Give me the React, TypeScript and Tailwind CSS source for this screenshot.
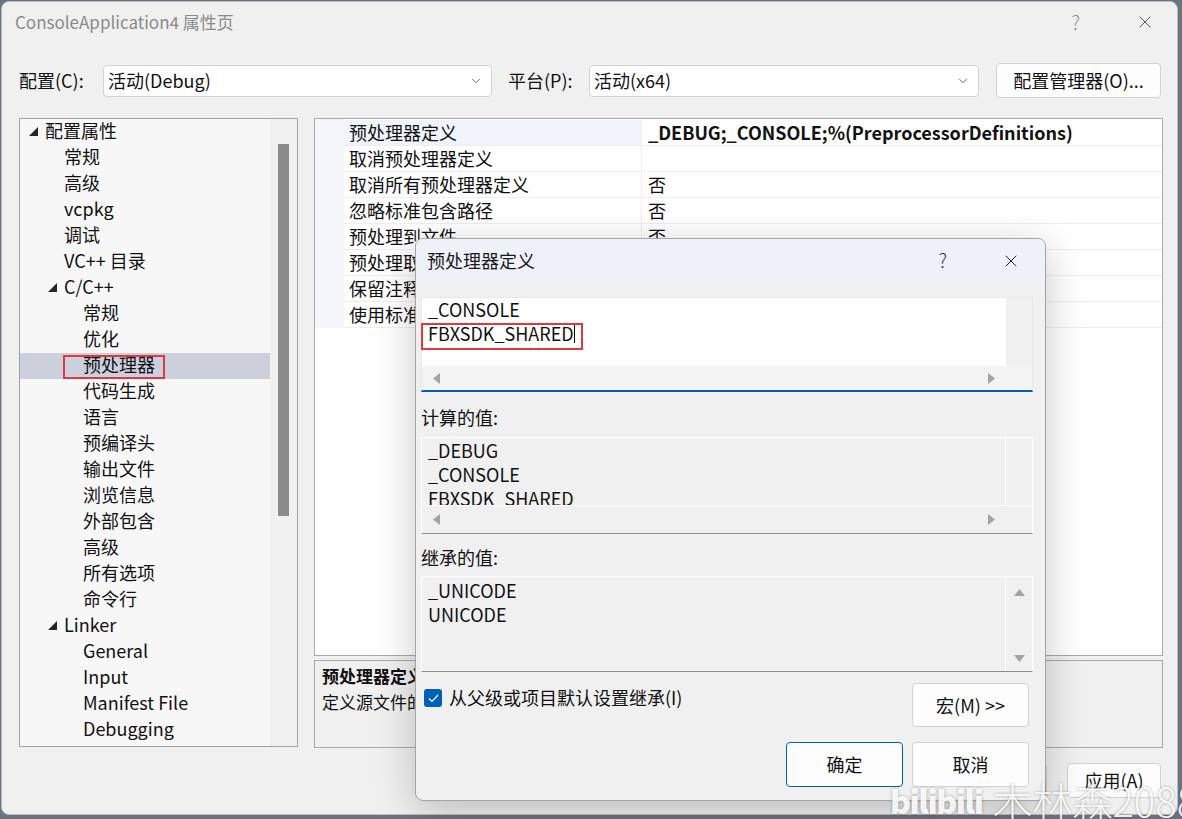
import { X, ChevronDown } from 'lucide-react'

type TreeItem = { label: string; level: 0 | 1 | 2; expand?: boolean; selected?: boolean }

const tree: TreeItem[] = [
  { label: '配置属性', level: 0, expand: true },
  { label: '常规', level: 1 },
  { label: '高级', level: 1 },
  { label: 'vcpkg', level: 1 },
  { label: '调试', level: 1 },
  { label: 'VC++ 目录', level: 1 },
  { label: 'C/C++', level: 1, expand: true },
  { label: '常规', level: 2 },
  { label: '优化', level: 2 },
  { label: '预处理器', level: 2, selected: true },
  { label: '代码生成', level: 2 },
  { label: '语言', level: 2 },
  { label: '预编译头', level: 2 },
  { label: '输出文件', level: 2 },
  { label: '浏览信息', level: 2 },
  { label: '外部包含', level: 2 },
  { label: '高级', level: 2 },
  { label: '所有选项', level: 2 },
  { label: '命令行', level: 2 },
  { label: 'Linker', level: 1, expand: true },
  { label: 'General', level: 2 },
  { label: 'Input', level: 2 },
  { label: 'Manifest File', level: 2 },
  { label: 'Debugging', level: 2 },
]

const indent = { 0: 'w-[9px]', 1: 'w-[28px]', 2: 'w-[47px]' }

const props: [string, string, boolean?][] = [
  ['预处理器定义', '_DEBUG;_CONSOLE;%(PreprocessorDefinitions)', true],
  ['取消预处理器定义', ''],
  ['取消所有预处理器定义', '否'],
  ['忽略标准包含路径', '否'],
  ['预处理到文件', '否'],
  ['预处理取消显示行号', '否'],
  ['保留注释', '否'],
  ['使用标准符合性预处理器', ''],
]

function Expander() {
  return (
    <svg width="9" height="9" viewBox="0 0 9 9">
      <polygon points="9,0 9,9 0,9" fill="#262626" />
    </svg>
  )
}

function ArrowLeft() {
  return (
    <svg width="7" height="11" viewBox="0 0 7 11">
      <polygon points="7,0 7,11 0,5.5" fill="#a3a3a3" />
    </svg>
  )
}

function ArrowRight() {
  return (
    <svg width="7" height="11" viewBox="0 0 7 11">
      <polygon points="0,0 7,5.5 0,11" fill="#a3a3a3" />
    </svg>
  )
}

function HScroll() {
  return (
    <div className="flex-1 flex items-center justify-between pl-[11px] pr-[37px]">
      <ArrowLeft />
      <ArrowRight />
    </div>
  )
}

function Combo({ text, width }: { text: string; width: string }) {
  return (
    <div className={`${width} h-[32px] bg-white border border-[#d3d3d3] rounded-[4px] flex items-center pl-[4px] pr-[8px]`}>
      <span className="text-[18px] text-[#111]">{text}</span>
      <ChevronDown className="ml-auto w-[14px] h-[14px] text-[#555]" strokeWidth={1.5} />
    </div>
  )
}

function PreprocessorDialog() {
  return (
    <div className="absolute left-[415px] top-[238px] w-[631px] h-[563px] rounded-[8px] border border-[#a4a4a4] bg-[#f0f0f0] shadow-[0_10px_40px_rgba(0,0,0,0.22)] overflow-hidden flex flex-col">
      <div className="h-[47px] shrink-0 bg-[#eef2f8] flex items-center pl-[11px] pr-[24px] pb-[4px]">
        <span className="text-[18px] text-[#1a1a1a]">预处理器定义</span>
        <span className="ml-auto text-[19px] text-[#333] font-light">?</span>
        <X className="ml-[54px] w-[20px] h-[20px] text-[#222]" strokeWidth={1.2} />
      </div>

      <div className="flex flex-col pl-[5px] pt-[11px] text-[18px] text-[#111]">
        {/* edit box */}
        <div className="relative w-[612px] h-[95px] bg-[#f3f3f3] border border-[#e8e8e8] border-b-2 border-b-[#005fb8] flex flex-col">
          <div className="flex h-[68px]">
            <div className="w-[584px] bg-white pl-[6px] leading-[24px]">
              <div className="-mt-[1px]">_CONSOLE</div>
              <div className="flex items-center">
                FBXSDK_SHARED
                <span className="w-[1px] h-[20px] bg-black" />
              </div>
            </div>
            <div className="flex-1 bg-[#f0f0f0]" />
          </div>
          <HScroll />
          <div className="absolute left-[-1px] top-[25px] w-[162px] h-[27px] border-2 border-[#e0383e]" />
        </div>

        <div className="mt-[13px] leading-[24px]">计算的值:</div>
        <div className="mt-[8px] w-[612px] h-[97px] bg-[#f0f0f0] border border-white border-b-[#8c8c8c] flex flex-col">
          <div className="flex h-[68px]">
            <div className="w-[584px] border-r border-b border-white pl-[6px] leading-[24px] overflow-hidden">
              <div>_DEBUG</div>
              <div>_CONSOLE</div>
              <div>FBXSDK_SHARED</div>
            </div>
            <div className="flex-1 border-b border-white" />
          </div>
          <HScroll />
        </div>

        <div className="mt-[11px] leading-[24px]">继承的值:</div>
        <div className="mt-[7px] w-[612px] h-[96px] bg-[#f0f0f0] border border-white border-b-[#8c8c8c] flex">
          <div className="w-[584px] border-r border-white pl-[6px] pt-[1px] leading-[24px]">
            <div>_UNICODE</div>
            <div>UNICODE</div>
          </div>
          <div className="flex-1 flex flex-col items-center justify-between pt-[12px] pb-[9px]">
            <svg width="11" height="7" viewBox="0 0 11 7">
              <polygon points="0,7 5.5,0 11,7" fill="#a3a3a3" />
            </svg>
            <svg width="11" height="7" viewBox="0 0 11 7">
              <polygon points="0,0 11,0 5.5,7" fill="#a3a3a3" />
            </svg>
          </div>
        </div>

        <div className="mt-[11px] w-[612px] flex items-start">
          <div className="mt-[6px] ml-[3px] w-[18px] h-[18px] rounded-[3px] bg-[#005fb8] flex items-center justify-center">
            <svg width="11" height="9" viewBox="0 0 11 9">
              <path d="M1 4.5 L4 7.5 L10 1" stroke="white" strokeWidth="1.2" fill="none" />
            </svg>
          </div>
          <span className="ml-[7px] mt-[2px] leading-[24px]">从父级或项目默认设置继承(I)</span>
          <button className="ml-auto mr-[4px] w-[117px] h-[44px] bg-[#fdfdfd] border border-[#d2d2d2] rounded-[4px] text-[18px]">
            宏(M) &gt;&gt;
          </button>
        </div>

        <div className="mt-[15px] w-[612px] flex justify-end gap-[9px] pr-[4px]">
          <button className="w-[117px] h-[45px] bg-[#fdfdfd] border border-[#005fb8] rounded-[4px] text-[18px]">确定</button>
          <button className="w-[117px] h-[45px] bg-[#fdfdfd] border border-[#d2d2d2] rounded-[4px] text-[18px]">取消</button>
        </div>
      </div>
    </div>
  )
}

export default function App() {
  return (
    <div className="relative w-[1182px] h-[819px] overflow-hidden bg-[#6a7480] pt-[1px] pl-[1px] font-['Noto_Sans_CJK_SC',sans-serif] text-[#111]">
      <div className="w-[1177px] h-[814px] rounded-[8px] bg-[#f0f0f0] border border-[#bdbdbd] flex flex-col">
        {/* title bar */}
        <div className="h-[44px] shrink-0 flex items-center pl-[13px] pr-[22px] pb-[4px]">
          <span className="text-[17px] text-[#8a8a8a]">ConsoleApplication4 属性页</span>
          <span className="ml-auto text-[19px] text-[#8a8a8a] font-light">?</span>
          <X className="ml-[55px] w-[20px] h-[20px] text-[#555]" strokeWidth={1.2} />
        </div>

        {/* config row */}
        <div className="mt-[17px] h-[35px] flex items-center pl-[17px] text-[18px]">
          <span className="w-[84px]">配置(C):</span>
          <Combo text="活动(Debug)" width="w-[389px]" />
          <span className="ml-[16px] w-[81px]">平台(P):</span>
          <Combo text="活动(x64)" width="w-[390px]" />
          <button className="ml-[17px] w-[165px] h-[35px] bg-[#fdfdfd] border border-[#d2d2d2] rounded-[4px] text-[18px]">
            配置管理器(O)...
          </button>
        </div>

        {/* main */}
        <div className="mt-[20px] flex pl-[17px] gap-[16px]">
          <div className="w-[279px] h-[629px] border border-[#a3a3a3] bg-[#f7f7f7] flex overflow-hidden">
            <div className="w-[250px] text-[18px]">
              {tree.map((t, i) => (
                <div
                  key={i}
                  className={`relative h-[26px] flex items-center pb-[4px] ${t.selected ? 'bg-[#ccd0dc]' : ''}`}
                >
                  <div className={indent[t.level]} />
                  <div className="w-[16px] flex items-center pt-[2px]">{t.expand && <Expander />}</div>
                  <span className="leading-none">{t.label}</span>
                  {t.selected && (
                    <div className="absolute left-[43px] top-[2px] w-[102px] h-[24px] border-2 border-[#e0383e]" />
                  )}
                </div>
              ))}
            </div>
            <div className="flex-1 bg-[#f0f0f0] pt-[25px] pl-[8px]">
              <div className="w-[11px] h-[372px] bg-[#8b8b8b]" />
            </div>
          </div>

          <div className="w-[849px] flex flex-col">
            <div className="h-[538px] border border-[#a9a9a9] bg-white flex">
              <div className="w-[29px] h-[209px] bg-[#f5f7fb]" />
              <div className="flex-1 pt-[1px] text-[18px]">
                {props.map(([k, v, bold], i) => (
                  <div key={i} className="h-[26px] flex border-b border-[#eeeeee]">
                    <div className={`w-[298px] border-r border-[#eeeeee] pl-[5px] flex items-center ${i === 0 ? 'bg-[#f0f4fa]' : ''}`}>
                      {k}
                    </div>
                    <div className={`pl-[6px] flex items-center ${bold ? 'font-bold' : ''}`}>{v}</div>
                  </div>
                ))}
              </div>
            </div>
            <div className="mt-[4px] h-[88px] border border-[#a9a9a9] bg-[#f0f0f0] pl-[7px] pt-[2px] text-[17px] leading-[26px]">
              <div className="font-bold">预处理器定义</div>
              <div>定义源文件的预处理器符号。</div>
            </div>
          </div>
        </div>

        {/* bottom buttons */}
        <div className="mt-[15px] flex justify-end gap-[20px] pr-[16px]">
          <button className="w-[94px] h-[35px] bg-[#fdfdfd] border border-[#d2d2d2] rounded-[4px] text-[18px]">确定</button>
          <button className="w-[94px] h-[35px] bg-[#fdfdfd] border border-[#d2d2d2] rounded-[4px] text-[18px]">取消</button>
          <button className="w-[94px] h-[35px] bg-[#fdfdfd] border border-[#d2d2d2] rounded-[4px] text-[18px]">应用(A)</button>
        </div>
      </div>

      <PreprocessorDialog />

      {/* watermark */}
      <div className="absolute left-[890px] top-[780px] flex items-start gap-[10px] text-white/90 pointer-events-none [text-shadow:0_0_3px_rgba(0,0,0,0.35)]">
        <span className="text-[32px] font-black leading-none tracking-[-1.5px] mt-[4px]">bilibili</span>
        <span className="text-[40px] leading-none font-light whitespace-nowrap">木林森2088</span>
      </div>
    </div>
  )
}
